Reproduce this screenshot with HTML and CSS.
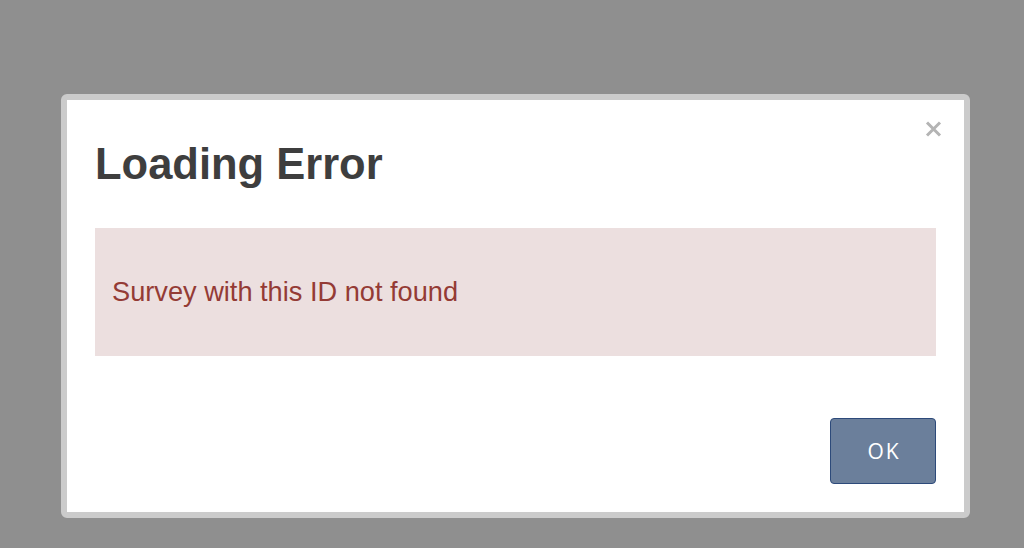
FILE: index.html
```html
<!DOCTYPE html>
<html lang="en">
<head>
<meta charset="utf-8">
<title>Loading Error</title>
<link rel="stylesheet" href="styles.css">
</head>
<body>
<div class="overlay">
  <div class="dialog" role="dialog" aria-labelledby="dlg-title">
    <button class="close" aria-label="Close">
      <svg width="17" height="16" viewBox="0 0 17 16" aria-hidden="true">
        <path d="M2 1.5 L15 14.5 M15 1.5 L2 14.5" stroke="#b4b4b4" stroke-width="3" fill="none"/>
      </svg>
    </button>
    <h1 class="title" id="dlg-title">Loading Error</h1>
    <div class="alert">Survey with this ID not found</div>
    <div class="footer">
      <button class="ok">OK</button>
    </div>
  </div>
</div>
</body>
</html>
```

FILE: styles.css
```css
html, body {
  margin: 0;
  padding: 0;
  height: 100%;
}
body {
  background: #8f8f8f;
  font-family: "Liberation Sans", Arial, sans-serif;
}
.overlay {
  padding: 94px 0 0 61px;
}
.dialog {
  position: relative;
  box-sizing: border-box;
  width: 909px;
  height: 424px;
  border: 6px solid #cbcbcb;
  border-radius: 6px;
  background: #ffffff;
  padding: 40px 28px 28px 28px;
  display: flex;
  flex-direction: column;
}
.close {
  position: absolute;
  top: 21px;
  right: 22px;
  padding: 0;
  margin: 0;
  border: 0;
  background: none;
  width: 17px;
  height: 16px;
  display: block;
  cursor: pointer;
}
.close svg {
  display: block;
}
.title {
  margin: 0;
  font-size: 43.5px;
  line-height: 48px;
  font-weight: bold;
  color: #3e3e3e;
}
.alert {
  margin-top: 40px;
  height: 128px;
  box-sizing: border-box;
  background: #ecdfdf;
  color: #943b35;
  font-size: 27.2px;
  line-height: 32px;
  padding-left: 17px;
  display: flex;
  align-items: center;
}
.footer {
  margin-top: 62px;
  display: flex;
  justify-content: flex-end;
}
.ok {
  width: 106px;
  height: 66px;
  box-sizing: border-box;
  border: 1px solid #2d4a7a;
  border-radius: 4px;
  background: #6b7f9b;
  color: #ffffff;
  font-family: "Open Sans", sans-serif;
  font-size: 21px;
  letter-spacing: 2px;
  padding: 0 0 0 2px;
  cursor: pointer;
}
```
